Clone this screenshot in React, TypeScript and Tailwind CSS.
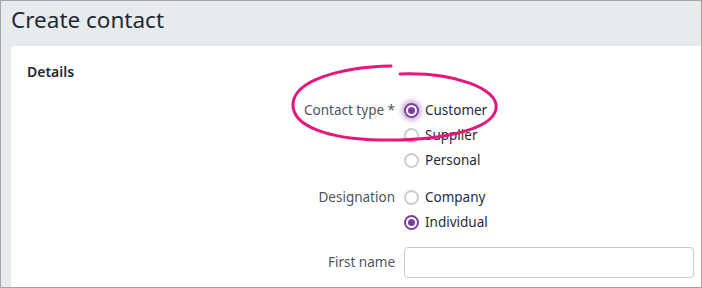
import React from "react";

type Opt = { label: string; checked?: boolean; focus?: boolean };

function Radio({ label, checked, focus }: Opt) {
  return (
    <div className="flex h-[25px] items-center gap-[6px]">
      <span
        className={`flex h-[15px] w-[15px] shrink-0 items-center justify-center rounded-full border-2 bg-white ${
          checked ? "border-[#7b3d9e]" : "border-[#c9ccd1]"
        } ${focus ? "shadow-[0_0_4px_3px_rgba(123,61,158,0.35)]" : ""}`}
      >
        {checked && <span className="h-[7px] w-[7px] rounded-full bg-[#7b3d9e]" />}
      </span>
      <span className="text-[13.5px] text-[#1f2a37]">{label}</span>
    </div>
  );
}

function Field({ label, children }: { label: string; children: React.ReactNode }) {
  return (
    <div className="flex items-start">
      <div className="w-[377px] shrink-0 pr-[9px] text-right text-[13.5px] leading-[25px] text-[#4b5563]">
        {label}
      </div>
      <div className="flex flex-col">{children}</div>
    </div>
  );
}

export default function App() {
  return (
    <div
      className="relative h-[288px] w-[702px] overflow-hidden border border-[#a3a3a3] bg-[#e8ebee]"
      style={{ fontFamily: '"Segoe UI", "Noto Sans", "Open Sans", sans-serif' }}
    >
      <div className="flex h-[45px] items-start pl-[10px] pt-[3px]">
        <h1 className="text-[22.5px] leading-[32px] text-[#1e2936]">Create contact</h1>
      </div>
      <div className="ml-[10px] h-full rounded-tl-[4px] bg-white pl-[16px] pt-[16px]">
        <h2 className="text-[14px] font-semibold leading-[20px] text-[#1e2936]">Details</h2>
        <div className="mt-[16px] flex flex-col gap-[12px]">
          <Field label="Contact type *">
            <Radio label="Customer" checked focus />
            <Radio label="Supplier" />
            <Radio label="Personal" />
          </Field>
          <Field label="Designation">
            <Radio label="Company" />
            <Radio label="Individual" checked />
          </Field>
          <div className="flex items-center">
            <div className="w-[377px] shrink-0 pr-[9px] text-right text-[13.5px] text-[#4b5563]">First name</div>
            <div className="h-[31px] w-[290px] rounded-[4px] border border-[#c6c9cc] bg-white" />
          </div>
          <div className="ml-[377px] h-[30px] w-[290px] rounded-[4px] border border-[#c6c9cc]" />
        </div>
      </div>
      <svg className="pointer-events-none absolute left-[-1px] top-[-1px]" width="702" height="288">
        <path
          d="M 400 74 C 452 72, 500 88, 496 109 C 492 130, 440 141, 380 140 C 328 139, 292 126, 293 104 C 294 80, 342 67, 391 66"
          fill="none"
          stroke="#e5177b"
          strokeWidth="3"
          strokeLinecap="round"
        />
      </svg>
    </div>
  );
}
